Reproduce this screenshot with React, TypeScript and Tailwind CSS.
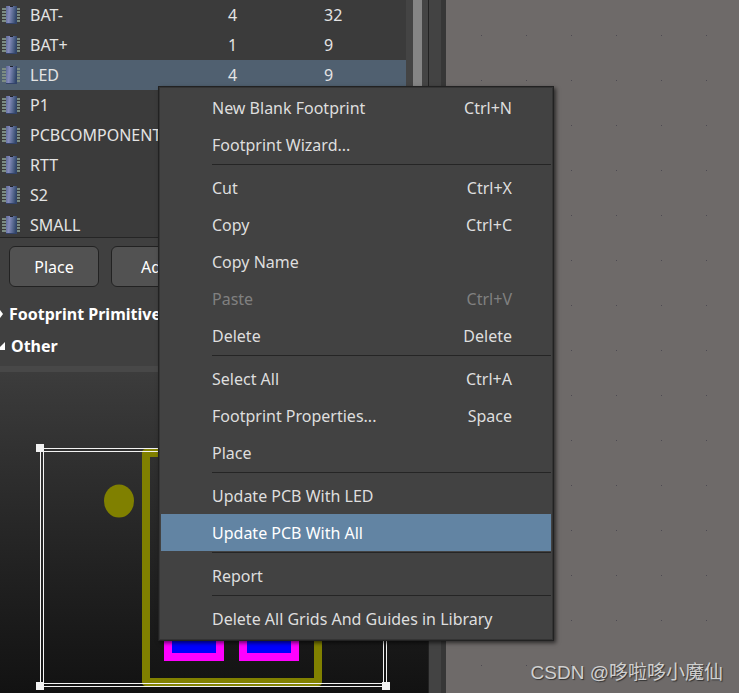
import clsx from 'clsx'

type Footprint = { name: string; pads?: number; primitives?: number }

const footprints: Footprint[] = [
  { name: 'BAT-', pads: 4, primitives: 32 },
  { name: 'BAT+', pads: 1, primitives: 9 },
  { name: 'LED', pads: 4, primitives: 9 },
  { name: 'P1' },
  { name: 'PCBCOMPONENT' },
  { name: 'RTT' },
  { name: 'S2' },
  { name: 'SMALL' },
]

type MenuItem = { label: string; shortcut?: string; disabled?: boolean }

const menuGroups: MenuItem[][] = [
  [{ label: 'New Blank Footprint', shortcut: 'Ctrl+N' }, { label: 'Footprint Wizard...' }],
  [
    { label: 'Cut', shortcut: 'Ctrl+X' },
    { label: 'Copy', shortcut: 'Ctrl+C' },
    { label: 'Copy Name' },
    { label: 'Paste', shortcut: 'Ctrl+V', disabled: true },
    { label: 'Delete', shortcut: 'Delete' },
  ],
  [
    { label: 'Select All', shortcut: 'Ctrl+A' },
    { label: 'Footprint Properties...', shortcut: 'Space' },
    { label: 'Place' },
  ],
  [{ label: 'Update PCB With LED' }, { label: 'Update PCB With All' }],
  [{ label: 'Report' }],
  [{ label: 'Delete All Grids And Guides in Library' }],
]

function ChipIcon() {
  return (
    <svg width="18" height="20" viewBox="0 0 18 20" aria-hidden="true">
      <defs>
        <linearGradient id="chip" x1="0" y1="0" x2="1" y2="0.15">
          <stop offset="0" stopColor="#5c6898" />
          <stop offset="0.35" stopColor="#858bba" />
          <stop offset="0.7" stopColor="#56678f" />
          <stop offset="1" stopColor="#304468" />
        </linearGradient>
      </defs>
      {/* Pins */}
      {[4, 7, 10, 13, 16].map((y) => (
        <path key={y} d={`M0 ${y}h4M15 ${y}h3`} stroke="#7c8c83" strokeWidth="2" />
      ))}
      <path d="M4 1h11v18H4z" fill="url(#chip)" />
      <path d="M4 18h11v1H4z" fill="#33436a" />
      <path d="M8 1h3v1H8z" fill="#20242e" />
    </svg>
  )
}

function FootprintList() {
  return (
    <div className="flex h-[237px] overflow-hidden bg-[#3b3b3b]">
      <table className="w-[406px] shrink-0 table-fixed self-start text-left">
        <tbody>
          {footprints.map((row) => (
            <tr key={row.name} className={clsx('h-[30px]', row.name === 'LED' && 'bg-[#506070]')}>
              <td className="w-[30px] pl-[2px]">
                <ChipIcon />
              </td>
              <td className="w-[198px]">{row.name}</td>
              <td className="w-24">{row.pads}</td>
              <td>{row.primitives}</td>
            </tr>
          ))}
        </tbody>
      </table>
      <div className="flex flex-1 bg-[#444444] pl-[7px]">
        <div className="w-[9px] bg-[#858585]" />
      </div>
    </div>
  )
}

function FootprintPreview() {
  return (
    <div className="flex-1 bg-linear-to-b from-[#3c3c3c] to-[#121212]">
      <svg width="428" height="321" viewBox="0 372 428 321" aria-hidden="true">
        <ellipse cx="119" cy="501" rx="15" ry="16.5" fill="#808000" />
        <rect x="146" y="453" width="172" height="229" fill="none" stroke="#808000" strokeWidth="8" strokeLinejoin="round" />
        <rect x="168" y="580" width="52" height="77" fill="#0000ff" stroke="#ff00ff" strokeWidth="8" />
        <rect x="243" y="580" width="52" height="77" fill="#0000ff" stroke="#ff00ff" strokeWidth="8" />
        <g fill="none" stroke="#f2f2f2">
          <rect x="40.5" y="448.5" width="346" height="238" />
          <rect x="43.5" y="451.5" width="340" height="232" />
        </g>
        <path d="M36 444h8v8h-8zM36 682h8v8h-8zM382 682h8v8h-8z" fill="#f2f2f2" />
      </svg>
    </div>
  )
}

function ContextMenu() {
  return (
    <div
      role="menu"
      className="absolute top-[86px] left-[158px] flex w-[396px] flex-col border border-[#222222] bg-[#424242] px-[2px] pt-[2px] pb-[3px] text-[#dedede] shadow-[inset_0_0_0_1px_#343434,2px_2px_4px_rgba(0,0,0,0.6)]"
    >
      {menuGroups.map((group, i) => (
        <div key={group[0].label} className="flex flex-col">
          {i > 0 && (
            <div className="h-[6px] pt-px pl-[51px]">
              <hr className="border-[#252525]" />
            </div>
          )}
          {group.map((item) => (
            <button
              key={item.label}
              role="menuitem"
              disabled={item.disabled}
              className={clsx(
                'flex h-[37px] items-center justify-between pr-[39px] pl-[51px]',
                item.disabled && 'text-[#808080]',
                item.label === 'Update PCB With All' && 'bg-[#6284a3] text-white',
              )}
            >
              <span>{item.label}</span>
              {item.shortcut && <span>{item.shortcut}</span>}
            </button>
          ))}
        </div>
      ))}
    </div>
  )
}

export default function App() {
  return (
    <div className="relative flex min-h-screen overflow-hidden bg-[#6e6a69] font-['Noto_Sans',sans-serif] text-base leading-6 whitespace-nowrap text-[#e4e4e4]">
      {/* Library panel */}
      <div className="flex w-[429px] shrink-0 flex-col border-r border-[#222222] bg-[#404040]">
        <FootprintList />
        <div className="flex gap-3 border-t border-[#252525] px-[9px] pt-2 pb-[11px]">
          {['Place', 'Add'].map((label) => (
            <button
              key={label}
              className="h-[41px] w-[90px] shrink-0 rounded-md border border-[#222222] bg-[#525252] text-white"
            >
              {label}
            </button>
          ))}
        </div>
        <button className="flex h-8 items-center gap-[6px] font-bold text-white">
          <svg width="3" height="8" aria-hidden="true">
            <path d="M0 0l3 4-3 4z" fill="currentColor" />
          </svg>
          Footprint Primitives
        </button>
        <button className="flex h-8 items-center gap-[6px] font-bold text-white">
          <svg width="5" height="8" aria-hidden="true">
            <path d="M5 0v8H0V5z" fill="currentColor" />
          </svg>
          Other
        </button>
        <div className="mt-1 h-[6px] bg-[#484848]" />
        <FootprintPreview />
      </div>
      <div className="w-[17px] shrink-0 border-r-[5px] border-[#373737] bg-[#434343]" />

      {/* Editor canvas */}
      <div className="flex flex-1 items-end justify-end bg-[conic-gradient(from_270deg_at_1px_1px,#4d4a52_90deg,transparent_0)] bg-[length:45px_45px] bg-[position:35px_35px] px-4 pb-[6px] font-['Liberation_Sans','Noto_Sans_CJK_SC',sans-serif] text-[19px] leading-7 text-[#d0d0d0] text-shadow-[1px_1px_1px_#333333]">
        CSDN @哆啦哆小魔仙
      </div>

      <ContextMenu />
    </div>
  )
}
